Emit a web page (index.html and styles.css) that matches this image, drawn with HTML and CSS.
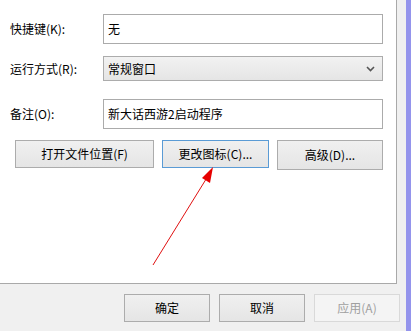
FILE: index.html
```html
<!DOCTYPE html>
<html>
  <head>
    <meta charset="utf-8">
    <title>属性</title>
    <link rel="stylesheet" href="styles.css">
  </head>

  <body>
    <div class="window">
      <div class="dialog">
        <!-- Shortcut tab panel -->
        <div class="panel">
          <div class="row row-key">
            <label class="row-label">快捷键(K):</label>
            <div class="field">无</div>
          </div>

          <div class="row row-run">
            <label class="row-label">运行方式(R):</label>
            <div class="field select">
              <span>常规窗口</span>
              <svg class="chevron" width="9" height="6" viewBox="0 0 9 6">
                <path d="M1 1 L4.5 4.5 L8 1" fill="none" stroke="#555" stroke-width="1.6"/>
              </svg>
            </div>
          </div>

          <div class="row row-note">
            <label class="row-label">备注(O):</label>
            <div class="field">新大话西游2启动程序</div>
          </div>

          <div class="actions">
            <button class="btn btn-open">打开文件位置(F)</button>
            <button class="btn btn-icon focused">更改图标(C)...</button>
            <button class="btn btn-adv">高级(D)...</button>
          </div>
        </div>

        <!-- Bottom buttons -->
        <div class="footer">
          <button class="btn btn-foot">确定</button>
          <button class="btn btn-foot">取消</button>
          <button class="btn btn-foot disabled">应用(A)</button>
        </div>
      </div>

      <div class="edge"></div>
    </div>

    <!-- red annotation arrow over the dialog -->
    <svg class="arrow" width="411" height="331" viewBox="0 0 411 331">
      <line x1="153" y1="265" x2="208" y2="176" stroke="#e01010" stroke-width="1"/>
      <polygon points="213,167 202,178 210,183" fill="#e60000"/>
    </svg>
  </body>
</html>
```

FILE: styles.css
```css
/* Reset */
* {
  margin: 0;
  padding: 0;
  box-sizing: border-box;
}

body {
  font-family: "Noto Sans CJK SC", "Liberation Sans", sans-serif;
  font-size: 12px;
  color: #000;
  background-color: #f0f0f0;
  width: 411px;
  height: 331px;
  overflow: hidden;
}

.window {
  display: flex;
  height: 331px;
}

.dialog {
  width: 406px;
  display: flex;
  flex-direction: column;
}

.edge {
  width: 5px;
  background-color: #9494ec;
}

/* Panel => white tab page */
.panel {
  width: 397px;
  height: 284px;
  background-color: #fff;
  border-right: 1px solid #a9a9a9;
  border-bottom: 1px solid #a9a9a9;
  padding: 14px 0 0 10px;
}

.row {
  display: flex;
  align-items: center;
}
.row-label {
  width: 93px;
  line-height: 16px;
}
.field {
  width: 280px;
  height: 30px;
  border: 1px solid #ababab;
  padding: 0 4px;
  display: flex;
  align-items: center;
  line-height: 16px;
}
.select {
  height: 25px;
  justify-content: space-between;
  padding-right: 7px;
  border-color: #acacac;
  background: linear-gradient(#f2f2f2, #e5e5e5);
}
.chevron {
  margin-top: 1px;
}

.row-run {
  margin-top: 12px;
}
.row-note {
  margin-top: 18px;
}

/* Buttons => classic win8 look */
.btn {
  font-family: inherit;
  font-size: 12px;
  color: #000;
  height: 28px;
  border: 1px solid #acacac;
  background: linear-gradient(#f0f0f0, #e5e5e5);
  line-height: 16px;
}
.btn.focused {
  border-color: #3c7fb1;
  border-color: #5a9bd5;
}
.btn.disabled {
  color: #a0a0a0;
  border-color: #d9d9d9;
  background: #f4f4f4;
}

.actions {
  display: flex;
  margin-top: 11px;
  padding-left: 5px;
}
.btn-open {
  width: 139px;
}
.btn-icon {
  width: 107px;
  margin-left: 8px;
}
.btn-adv {
  width: 106px;
  margin-left: 8px;
  height: 30px;
}

.footer {
  display: flex;
  padding: 10px 0 0 124px;
  gap: 9px;
}
.btn-foot {
  width: 86px;
}

.arrow {
  position: absolute;
  left: 0;
  top: 0;
}
```
